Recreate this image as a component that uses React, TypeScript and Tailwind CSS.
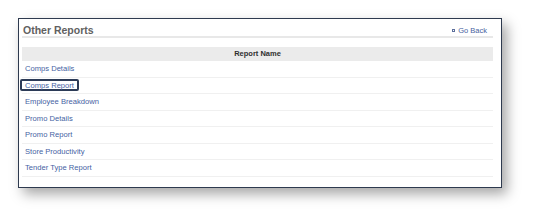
import React from "react";

const rows = [
  "Comps Details",
  "Comps Report",
  "Employee Breakdown",
  "Promo Details",
  "Promo Report",
  "Store Productivity",
  "Tender Type Report",
];

export default function App() {
  return (
    <div
      className="w-[535px] h-[216px] bg-white overflow-hidden"
      style={{ fontFamily: '"Liberation Sans", Arial, sans-serif' }}
    >
      <div className="ml-[18px] mt-[18px] w-[484px] h-[170px] border border-[#2e3a4f] bg-white shadow-[5px_6px_12px_rgba(0,0,0,0.35)] pl-[3px] pr-[8px] pt-[6px]">
        <div className="flex items-end justify-between h-[13px] border-b-2 border-[#e8e8e8]">
          <span className="ml-[1px] text-[10.5px] leading-[12px] font-bold text-[#616161]">
            Other Reports
          </span>
          <span className="flex items-center gap-[3px] mr-[6px] pb-[1px] text-[7.5px] leading-[9px] text-[#4762a0]">
            <span className="inline-block w-[3px] h-[3px] border border-[#5d6f9c]" />
            Go Back
          </span>
        </div>
        <div className="mt-[9px] h-[14px] bg-[#ebebeb] flex items-center justify-center text-[7.5px] font-bold text-[#2f2f2f]">
          Report Name
        </div>
        <div>
          {rows.map((r) => (
            <div
              key={r}
              className="h-[16.5px] border-b border-[#f0f0f0] flex items-center pl-[3px] text-[7.6px] text-[#4562a3] antialiased"
            >
              {r === "Comps Report" ? (
                <span className="-ml-[5px] h-[12px] flex items-center pl-[3px] pr-[3px] border-2 border-[#2c3b57] rounded-[2px]">
                  {r}
                </span>
              ) : (
                <span>{r}</span>
              )}
            </div>
          ))}
        </div>
      </div>
    </div>
  );
}
